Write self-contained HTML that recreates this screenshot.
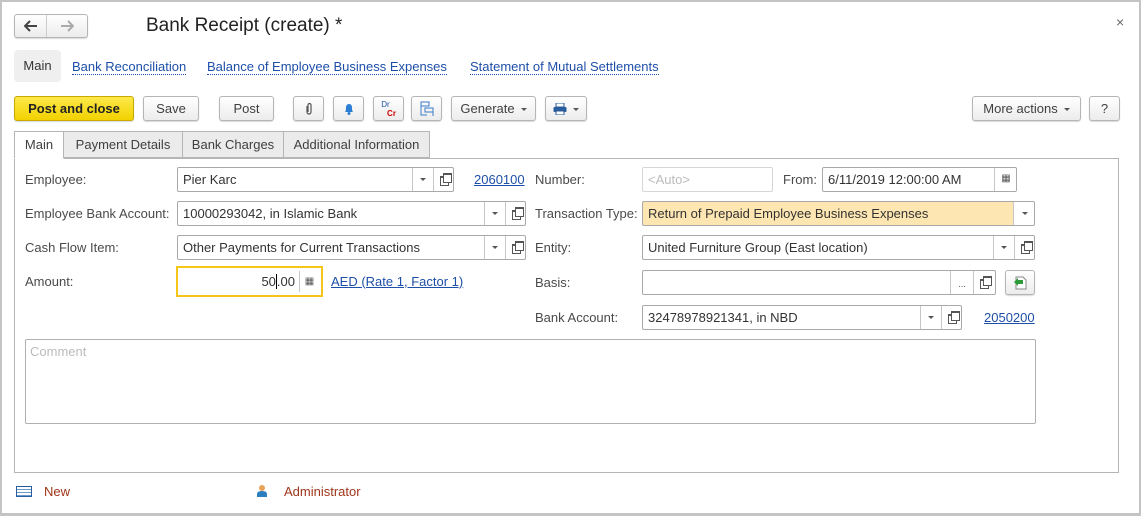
<!DOCTYPE html>
<html><head><meta charset="utf-8"><style>
*{box-sizing:border-box;margin:0;padding:0}
body{width:1141px;height:516px;background:#fff;font-family:"Liberation Sans",Arial,sans-serif;font-size:13px;color:#333;position:relative;overflow:hidden}
.a{position:absolute}
.frame{left:0;top:0;width:1141px;height:516px;border:2px solid #c4c4c4;border-bottom-width:3px}
.btn{position:absolute;height:25px;border:1px solid #b5b5b5;border-radius:3px;background:linear-gradient(#fff,#ececec);box-shadow:0 1px 1px rgba(0,0,0,.15);text-align:center;line-height:23px;color:#404040;font-size:13px}
.lnk{position:absolute;color:#1e4fa8;font-size:13px;border-bottom:1px dotted #1e4fa8;line-height:15px}
.ul{position:absolute;color:#1e4fa8;font-size:13px;text-decoration:underline}
.tab{position:absolute;top:131px;height:27px;border:1px solid #b5b5b5;background:#ebebeb;line-height:25px;text-align:center;font-size:13px;color:#404040}
.lbl{position:absolute;font-size:13px;color:#4a4a4a}
.in{position:absolute;height:25px;border:1px solid #a9a9a9;border-radius:2px;background:#fff;line-height:23px;padding-left:5px;font-size:13px;color:#333;white-space:nowrap}
.cell{position:absolute;top:0;height:23px;border-left:1px solid #c6c6c6;text-align:center;line-height:22px;font-size:9px;color:#555}
.dd::after{content:"";position:absolute;left:50%;top:10px;margin-left:-3px;border:3px solid transparent;border-top:3px solid #555}
.op::after{content:"";position:absolute;left:6px;top:8px;width:7px;height:7px;border:1px solid #555;border-top-width:2px}
.op::before{content:"";position:absolute;left:9px;top:5px;width:7px;height:7px;border:1px solid #555;border-top-width:2px;background:#fff;z-index:1}
.caret{display:inline-block;border:3px solid transparent;border-top:3px solid #555;margin-left:6px;vertical-align:middle;margin-top:3px}
</style></head><body>
<div class="a frame"></div>

<div class="btn" style="left:14px;top:14px;width:74px;height:24px;padding:0">
<span class="a" style="left:31px;top:0;width:1px;height:22px;background:#ccc"></span>
<svg class="a" style="left:9px;top:5px" width="14" height="12" viewBox="0 0 14 12"><path d="M1 6h12M6 1L1 6l5 5" stroke="#444" stroke-width="2" fill="none"/></svg>
<svg class="a" style="left:45px;top:5px" width="14" height="12" viewBox="0 0 14 12"><path d="M1 6h12M8 1l5 5-5 5" stroke="#aaa" stroke-width="2" fill="none"/></svg>
</div>
<div class="a" style="left:146px;top:15px;font-size:19px;color:#222">Bank Receipt (create) *</div>
<div class="a" style="left:1116px;top:14px;font-size:14px;color:#666">×</div>

<div class="a" style="left:14px;top:50px;width:47px;height:32px;background:#efefef;border-radius:4px;line-height:32px;text-align:center;font-size:13px;color:#333">Main</div>
<span class="lnk" style="left:72px;top:59px">Bank Reconciliation</span>
<span class="lnk" style="left:207px;top:59px">Balance of Employee Business Expenses</span>
<span class="lnk" style="left:470px;top:59px">Statement of Mutual Settlements</span>

<div class="btn" style="left:14px;top:96px;width:120px;background:linear-gradient(#fde94a,#f2d200);border-color:#c9a800;font-weight:bold;color:#222;font-size:13px">Post and close</div>
<div class="btn" style="left:143px;top:96px;width:56px">Save</div>
<div class="btn" style="left:219px;top:96px;width:55px">Post</div>
<div class="btn" style="left:293px;top:96px;width:31px"><svg width="8" height="14" viewBox="0 0 8 14" style="margin-top:5px"><path d="M2 4v6a2 2 0 0 0 4 0V3a1.5 1.5 0 0 0-3 0v7" stroke="#555" stroke-width="1.2" fill="none"/></svg></div>
<div class="btn" style="left:333px;top:96px;width:31px"><svg width="14" height="14" viewBox="0 0 14 14" style="margin-top:5px"><path d="M3 10 Q4 9 4 6 Q4 2 7 2 Q10 2 10 6 Q10 9 11 10 Z" fill="#2a7fd4"/><circle cx="7" cy="11.5" r="1.5" fill="#2a7fd4"/></svg></div>
<div class="btn" style="left:373px;top:96px;width:31px;font-size:8px;line-height:9px;padding-top:3px"><span style="color:#1e4fa8;margin-right:6px">Dr</span><br><span style="color:#c00;font-weight:bold;margin-left:6px">Cr</span></div>
<div class="btn" style="left:411px;top:96px;width:31px"><svg width="14" height="16" viewBox="0 0 14 16" style="margin-top:4px"><rect x="1" y="1" width="8" height="4" fill="none" stroke="#3a7bc8"/><rect x="5" y="7" width="8" height="4" fill="none" stroke="#3a7bc8"/><path d="M1 5v9h6M13 11v4" stroke="#3a7bc8" fill="none"/></svg></div>
<div class="btn" style="left:451px;top:96px;width:85px">Generate<span class="caret"></span></div>
<div class="btn" style="left:545px;top:96px;width:42px"><svg width="14" height="12" viewBox="0 0 14 12" style="margin-top:6px;vertical-align:top"><rect x="3" y="0" width="8" height="4" fill="#fff" stroke="#2a5d9c"/><rect x="0.5" y="4" width="13" height="5" rx="1" fill="#2a5d9c"/><rect x="3" y="8" width="8" height="4" fill="#fff" stroke="#2a5d9c"/></svg><span class="caret"></span></div>
<div class="btn" style="left:972px;top:96px;width:109px">More actions<span class="caret"></span></div>
<div class="btn" style="left:1089px;top:96px;width:31px;font-size:13px">?</div>

<div class="a" style="left:14px;top:158px;width:1105px;height:315px;border:1px solid #b5b5b5"></div>
<div class="tab" style="left:14px;width:50px;background:#fff;border-bottom-color:#fff;height:28px">Main</div>
<div class="tab" style="left:63px;width:120px">Payment Details</div>
<div class="tab" style="left:182px;width:102px">Bank Charges</div>
<div class="tab" style="left:283px;width:147px">Additional Information</div>

<div class="lbl" style="left:25px;top:172px">Employee:</div>
<div class="in" style="left:177px;top:167px;width:277px">Pier Karc<span class="cell dd" style="left:234px;width:21px"></span><span class="cell op" style="left:255px;width:21px"></span></div>
<span class="ul" style="left:474px;top:172px">2060100</span>

<div class="lbl" style="left:25px;top:206px">Employee Bank Account:</div>
<div class="in" style="left:177px;top:201px;width:349px">10000293042, in Islamic Bank<span class="cell dd" style="left:306px;width:21px"></span><span class="cell op" style="left:327px;width:21px"></span></div>

<div class="lbl" style="left:25px;top:240px">Cash Flow Item:</div>
<div class="in" style="left:177px;top:235px;width:349px">Other Payments for Current Transactions<span class="cell dd" style="left:306px;width:21px"></span><span class="cell op" style="left:327px;width:21px"></span></div>

<div class="lbl" style="left:25px;top:274px">Amount:</div>
<div class="in" style="left:176px;top:266px;width:147px;height:31px;border:2px solid #f5c518;border-radius:0;text-align:right;padding-right:26px;line-height:27px">50<span style="border-left:1px solid #000"></span>.00<span class="a" style="right:2px;top:3px;width:20px;height:21px;border-left:1px solid #c6c6c6;text-align:center;line-height:21px;font-size:10px;color:#555">▦</span></div>
<span class="ul" style="left:331px;top:274px">AED (Rate 1, Factor 1)</span>

<div class="lbl" style="left:535px;top:172px">Number:</div>
<div class="in" style="left:642px;top:167px;width:131px;border-color:#d6d6d6;color:#bbb">&lt;Auto&gt;</div>
<div class="lbl" style="left:783px;top:172px">From:</div>
<div class="in" style="left:822px;top:167px;width:195px">6/11/2019 12:00:00 AM<span class="cell" style="left:171px;width:23px;font-size:10px">▦</span></div>

<div class="lbl" style="left:535px;top:206px">Transaction Type:</div>
<div class="in" style="left:642px;top:201px;width:393px;background:linear-gradient(90deg,#fde6b2 0,#fde6b2 370px,#fff 370px)">Return of Prepaid Employee Business Expenses<span class="cell dd" style="left:370px;width:22px"></span></div>

<div class="lbl" style="left:535px;top:240px">Entity:</div>
<div class="in" style="left:642px;top:235px;width:393px">United Furniture Group (East location)<span class="cell dd" style="left:350px;width:21px"></span><span class="cell op" style="left:371px;width:21px"></span></div>

<div class="lbl" style="left:535px;top:275px">Basis:</div>
<div class="in" style="left:642px;top:270px;width:354px"><span class="cell" style="left:307px;width:23px;line-height:26px">...</span><span class="cell op" style="left:330px;width:23px"></span></div>
<div class="btn" style="left:1005px;top:270px;width:30px"><svg width="16" height="16" viewBox="0 0 16 16" style="margin-top:4px"><path d="M4 2h7l3 3v9H4z" fill="#fff" stroke="#888"/><path d="M2 7l4-4v2h5v4H6v2z" fill="#2e9a3a"/></svg></div>

<div class="lbl" style="left:535px;top:310px">Bank Account:</div>
<div class="in" style="left:642px;top:305px;width:320px">32478978921341, in NBD<span class="cell dd" style="left:277px;width:21px"></span><span class="cell op" style="left:298px;width:21px"></span></div>
<span class="ul" style="left:984px;top:310px">2050200</span>

<div class="in" style="left:25px;top:339px;width:1011px;height:85px;color:#bbb;line-height:24px;padding-left:4px;border-color:#b0b0b0">Comment</div>

<div class="a" style="left:16px;top:486px;width:16px;height:11px;border:1px solid #2a5d9c;background:repeating-linear-gradient(#fff 0 2px,#6a9ad0 2px 3px)"></div>
<div class="a" style="left:44px;top:484px;color:#a0361a;font-size:13px">New</div>
<svg class="a" style="left:256px;top:484px" width="12" height="14" viewBox="0 0 12 14"><circle cx="6" cy="4" r="3" fill="#e8a35a"/><path d="M1 13v-3q0-3 5-3t5 3v3z" fill="#2a7fc0"/></svg>
<div class="a" style="left:284px;top:484px;color:#a0361a;font-size:13px">Administrator</div>
</body></html>
